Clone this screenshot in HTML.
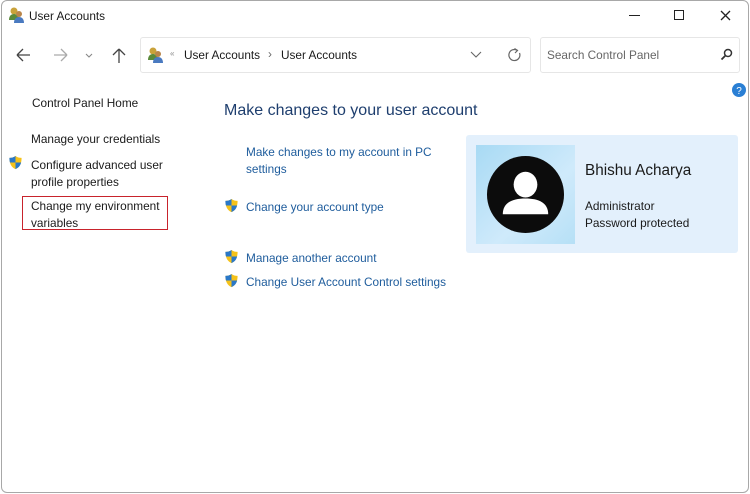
<!DOCTYPE html>
<html><head><style>
*{margin:0;padding:0;box-sizing:border-box}
body{width:750px;height:494px;background:#fff;font-family:"Liberation Sans",sans-serif;position:relative;overflow:hidden}
.win{position:absolute;left:1px;top:0;width:748px;height:493px;border:1px solid #a8a8a8;border-radius:6px;background:#fff}
.t{position:absolute;white-space:nowrap;font-size:11.8px;color:#1a1a1a}
.l{color:#1e5c9c}
.box{position:absolute;border:1px solid #e6e6e6;border-radius:3px;background:#fff}
svg{position:absolute}
</style></head><body>
<div class="win"></div>
<!-- title -->
<svg style="left:8px;top:6px" width="18" height="18" viewBox="0 0 18 18"><circle cx="6" cy="5" r="3.5" fill="#c9a23a"/><path d="M1 14c0-4 2-6 5-6s5 2 5 6z" fill="#5a8a3a"/><circle cx="11" cy="8" r="3" fill="#b9854a"/><path d="M6 17c0-4 2-6 5-6s5 2 5 6z" fill="#4a7ac0"/></svg>
<div class="t" style="left:29px;top:9px">User Accounts</div>
<div style="position:absolute;left:629px;top:15px;width:11px;height:1.3px;background:#222"></div>
<div style="position:absolute;left:674px;top:10px;width:10px;height:10px;border:1.3px solid #222"></div>
<svg style="left:720px;top:10px" width="11" height="11"><path d="M1 1l9 9M10 1l-9 9" stroke="#222" stroke-width="1.3"/></svg>
<!-- nav -->
<svg style="left:14px;top:46px" width="120" height="18"><path d="M3 9h13M3 9l6-6M3 9l6 6" stroke="#444" stroke-width="1.3" fill="none"/><path d="M40 9h13M53 9l-6-6M53 9l-6 6" stroke="#aaa" stroke-width="1.3" fill="none"/><path d="M72 8l3 3 3-3" stroke="#888" stroke-width="1.1" fill="none"/><path d="M105 3v14M105 3l-6 6M105 3l6 6" stroke="#444" stroke-width="1.3" fill="none"/></svg>
<div class="box" style="left:140px;top:37px;width:391px;height:36px"></div>
<svg style="left:147px;top:46px" width="18" height="18" viewBox="0 0 18 18"><circle cx="6" cy="5" r="3.5" fill="#c9a23a"/><path d="M1 14c0-4 2-6 5-6s5 2 5 6z" fill="#5a8a3a"/><circle cx="11" cy="8" r="3" fill="#b9854a"/><path d="M6 17c0-4 2-6 5-6s5 2 5 6z" fill="#4a7ac0"/></svg>
<div class="t" style="left:170px;top:49px;font-size:8px;color:#888">«</div>
<div class="t" style="left:184px;top:48px">User Accounts</div>
<div class="t" style="left:268px;top:47px;color:#666">›</div>
<div class="t" style="left:281px;top:48px">User Accounts</div>
<svg style="left:469px;top:47px" width="60" height="16"><path d="M2 5l5 5 5-5" stroke="#666" stroke-width="1.1" fill="none"/><path d="M48.5 3.5a5.5 5.5 0 1 0 2 2.5" stroke="#666" stroke-width="1.2" fill="none"/><path d="M45.5 1.5l3 2-2.5 2.5" stroke="#666" stroke-width="1.2" fill="none"/></svg>
<div class="box" style="left:540px;top:37px;width:200px;height:36px"></div>
<div class="t" style="left:547px;top:48px;color:#666">Search Control Panel</div>
<svg style="left:720px;top:47px" width="14" height="14"><circle cx="8" cy="6" r="3.5" stroke="#333" stroke-width="1.5" fill="none"/><path d="M5.5 8.5l-4 4" stroke="#333" stroke-width="1.8"/></svg>
<svg style="left:731px;top:82px" width="16" height="16"><circle cx="8" cy="8" r="7" fill="#2a7fd4"/><text x="8" y="12" font-size="10" fill="#fff" text-anchor="middle" font-family="Liberation Sans">?</text></svg>
<!-- left -->
<div class="t" style="left:32px;top:96px">Control Panel Home</div>
<div class="t" style="left:31px;top:132px">Manage your credentials</div>
<div class="t" style="left:31px;top:157px;line-height:17px">Configure advanced user<br>profile properties</div>
<div style="position:absolute;left:22px;top:196px;width:146px;height:34px;border:1.5px solid #c8232c"></div>
<div class="t" style="left:31px;top:198px;line-height:17px">Change my environment<br>variables</div>
<!-- right -->
<div class="t" style="left:224px;top:102px;font-size:16px;color:#1e3e6e">Make changes to your user account</div>
<div class="t l" style="left:246px;top:144px;line-height:17px">Make changes to my account in PC<br>settings</div>
<div class="t l" style="left:246px;top:200px">Change your account type</div>
<div class="t l" style="left:246px;top:251px">Manage another account</div>
<div class="t l" style="left:246px;top:275px">Change User Account Control settings</div>
<!-- shields -->
<svg width="0" height="0"><defs><symbol id="sh" viewBox="0 0 16 16"><path d="M8 1C6 2.5 4 3 1.5 3c0 6 2 10 6.5 12 4.5-2 6.5-6 6.5-12C12 3 10 2.5 8 1z" fill="#f5c21a"/><path d="M8 1C6 2.5 4 3 1.5 3c0 2 .2 3.5.6 5H8z" fill="#2a78c8"/><path d="M8 8h6c-.8 3.3-2.8 5.6-6 7z" fill="#2a78c8"/></symbol></defs></svg>
<svg style="left:8px;top:155px" width="15" height="15"><use href="#sh"/></svg>
<svg style="left:224px;top:198px" width="15" height="15"><use href="#sh"/></svg>
<svg style="left:224px;top:249px" width="15" height="15"><use href="#sh"/></svg>
<svg style="left:224px;top:273px" width="15" height="15"><use href="#sh"/></svg>
<!-- user card -->
<div style="position:absolute;left:466px;top:135px;width:272px;height:118px;background:#e3f0fc;border-radius:3px"></div>
<div style="position:absolute;left:476px;top:145px;width:99px;height:99px;background:linear-gradient(135deg,#a8daf4,#cfeafb 60%,#b6e0f6)"></div>
<svg style="left:486px;top:155px" width="79" height="79" viewBox="0 0 80 80"><circle cx="40" cy="40" r="39" fill="#0c0c0c"/><ellipse cx="40" cy="30" rx="12" ry="13" fill="#fff"/><path d="M17 60c0-12 10-16 23-16s23 4 23 16z" fill="#fff"/></svg>
<div class="t" style="left:585px;top:162px;font-size:15.3px">Bhishu Acharya</div>
<div class="t" style="left:585px;top:198px;line-height:17px">Administrator<br>Password protected</div>
</body></html>
